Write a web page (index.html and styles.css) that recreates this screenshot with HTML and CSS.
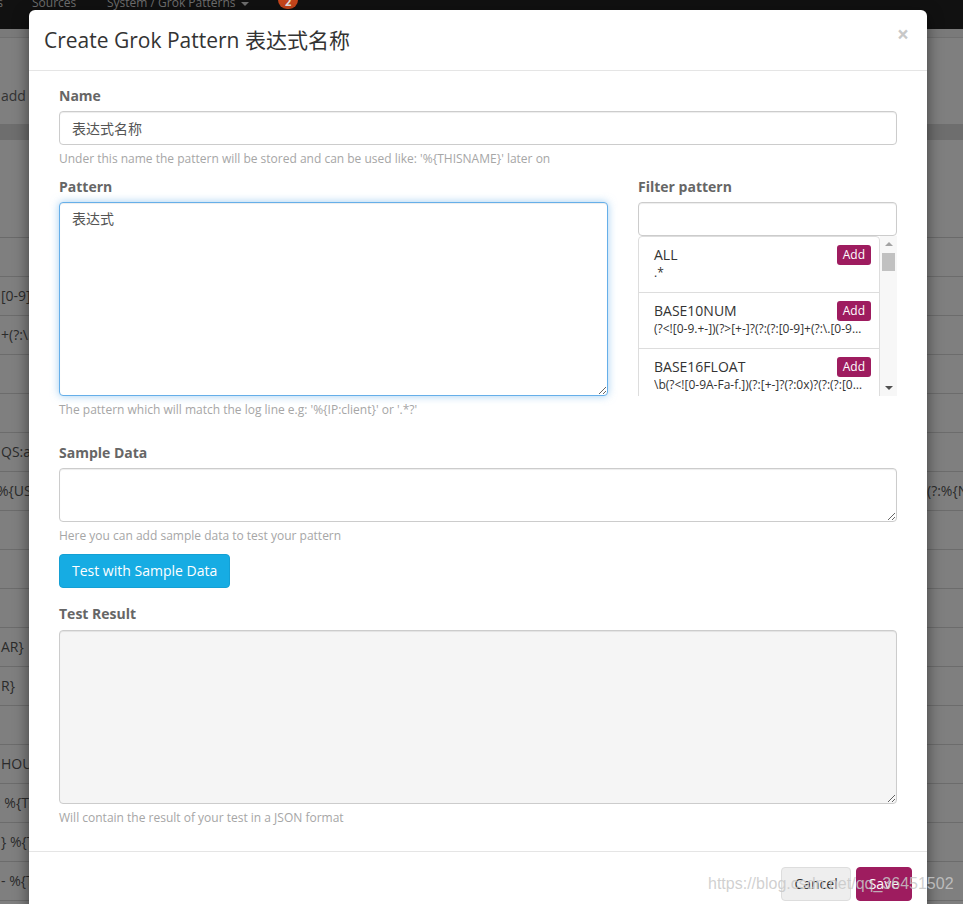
FILE: index.html
```html
<!DOCTYPE html>
<html lang="en">
<head>
<meta charset="utf-8">
<title>Grok Patterns</title>
<link rel="stylesheet" href="styles.css">
</head>
<body>
<div class="page">
  <div class="navbar">
    <span class="nav-item nav-first">Streams</span>
    <span class="nav-item nav-sources">Sources</span>
    <span class="nav-item nav-system">System / Grok Patterns <span class="caret"></span></span>
    <span class="nav-badge">2</span>
  </div>
  <div class="subbar"></div>
  <div class="intro"><span class="intro-text">add your own grok patterns</span></div>
  <div class="thead"></div>
  <div class="table">
    <div class="row row-tall"></div>
    <div class="row"></div>
    <div class="row"><span class="cell">[0-9]+(?:</span></div>
    <div class="row"><span class="cell">+(?:\.[0-9]+)</span></div>
    <div class="row"></div>
    <div class="row"></div>
    <div class="row"><span class="cell">QS:agent}</span></div>
    <div class="row"><span class="cell cell-shift">%{USER}</span><span class="cell-right">(?:%{NUMBER}</span></div>
    <div class="row"></div>
    <div class="row"></div>
    <div class="row"></div>
    <div class="row"><span class="cell">AR}</span></div>
    <div class="row"><span class="cell">R}</span></div>
    <div class="row"></div>
    <div class="row"><span class="cell">HOUR}</span></div>
    <div class="row"><span class="cell cell-shift">: %{TZ}</span></div>
    <div class="row"><span class="cell">} %{TIME}</span></div>
    <div class="row"><span class="cell">- %{TIME}</span></div>
  </div>
</div>

<div class="modal">
  <div class="modal-header">
    <h4 class="modal-title">Create Grok Pattern 表达式名称</h4>
    <span class="close">×</span>
  </div>
  <div class="modal-body">
    <div class="group group-name">
      <label class="label">Name</label>
      <input class="form-control" type="text" value="表达式名称">
      <p class="help">Under this name the pattern will be stored and can be used like: '%{THISNAME}' later on</p>
    </div>
    <div class="pattern-row">
      <div class="col">
        <label class="label">Pattern</label>
        <textarea class="form-control focused ta-pattern">表达式</textarea>
        <p class="help">The pattern which will match the log line e.g: '%{IP:client}' or '.*?'</p>
      </div>
      <div class="col">
        <label class="label">Filter pattern</label>
        <input class="form-control" type="text" value="">
        <div class="list-box">
          <ul class="list">
            <li class="item">
              <div class="item-head"><span class="item-name">ALL</span><span class="btn-add">Add</span></div>
              <div class="item-regex">.*</div>
            </li>
            <li class="item">
              <div class="item-head"><span class="item-name">BASE10NUM</span><span class="btn-add">Add</span></div>
              <div class="item-regex">(?&lt;![0-9.+-])(?&gt;[+-]?(?:(?:[0-9]+(?:\.[0-9]+)?)|(?:\.[0-9]+)))</div>
            </li>
            <li class="item">
              <div class="item-head"><span class="item-name">BASE16FLOAT</span><span class="btn-add">Add</span></div>
              <div class="item-regex">\b(?&lt;![0-9A-Fa-f.])(?:[+-]?(?:0x)?(?:(?:[0-9A-Fa-f]+(?:\.[0-9A-Fa-f]*)?)|(?:\.[0-9A-Fa-f]+)))\b</div>
            </li>
            <li class="item">
              <div class="item-head"><span class="item-name">BASE16NUM</span><span class="btn-add">Add</span></div>
              <div class="item-regex">(?&lt;![0-9A-Fa-f])(?:[+-]?(?:0x)?(?:[0-9A-Fa-f]+))</div>
            </li>
          </ul>
          <div class="scrollbar">
            <div class="sb-btn"><span class="arrow-up"></span></div>
            <div class="sb-track"><div class="sb-thumb"></div></div>
            <div class="sb-btn"><span class="arrow-down"></span></div>
          </div>
        </div>
      </div>
    </div>
    <div class="group group-sample">
      <label class="label">Sample Data</label>
      <textarea class="form-control ta-sample"></textarea>
      <p class="help">Here you can add sample data to test your pattern</p>
      <button class="btn btn-info" type="button">Test with Sample Data</button>
    </div>
    <div class="group group-result">
      <label class="label">Test Result</label>
      <textarea class="form-control ta-result" readonly></textarea>
      <p class="help help-last">Will contain the result of your test in a JSON format</p>
    </div>
  </div>
  <div class="modal-footer">
    <button class="btn btn-default" type="button">Cancel</button>
    <button class="btn btn-primary" type="button">Save</button>
  </div>
</div>

<div class="watermark">https://blog.csdn.net/qq_36451502</div>
</body>
</html>
```

FILE: styles.css
```css
* { box-sizing: border-box; }

html, body {
  margin: 0;
  height: 904px;
  overflow: hidden;
}

body {
  position: relative;
  font-family: "Open Sans", "Noto Sans CJK SC", sans-serif;
  font-size: 14px;
  line-height: 20px;
  color: #333;
  background: #7f7f7f;
}

/* ---------- background page (dimmed by backdrop) ---------- */
.navbar {
  height: 29px;
  background: #111;
  display: flex;
  align-items: flex-start;
  color: #6e6e6e;
  font-size: 12px;
  white-space: nowrap;
  overflow: hidden;
}
.nav-item { margin-top: -7px; }
.nav-first { width: 60px; margin-left: -57px; text-align: right; }
.nav-sources { margin-left: 29px; width: 75px; }
.nav-system { width: 171px; }
.caret {
  display: inline-block;
  width: 0; height: 0;
  margin-left: 2px;
  vertical-align: middle;
  border-top: 4px solid #6e6e6e;
  border-left: 4px solid transparent;
  border-right: 4px solid transparent;
}
.nav-badge {
  margin-top: -9px;
  height: 18px;
  padding: 4px 7px 0;
  border-radius: 9px;
  background: #c6451b;
  color: #e6e6e6;
  font-size: 11px;
  font-weight: bold;
  line-height: 14px;
}

.subbar {
  height: 9px;
  background: #7a7a7a;
  border-bottom: 1px solid #707070;
}
.intro {
  height: 86px;
  padding-top: 48px;
  color: #333;
  white-space: nowrap;
}
.intro-text { padding-left: 1px; }
.thead {
  height: 16px;
  background: #6e6e6e;
}

.table { display: flex; flex-direction: column; }
.row {
  height: 39px;
  border-bottom: 1px solid #6c6c6c;
  display: grid;
  grid-template-columns: 927px max-content;
  align-items: center;
  white-space: nowrap;
  color: #2b2b2b;
}
.row-tall { height: 98px; border-bottom-color: #6a6a6a; }
.cell { grid-column: 1; padding-left: 1px; }
.cell-shift { margin-left: -4px; }
.cell-right { grid-column: 2; }

/* ---------- modal ---------- */
.modal {
  position: absolute;
  top: 10px;
  left: 29px;
  width: 898px;
  background: #fff;
  border-radius: 6px;
  box-shadow: 0 5px 15px rgba(0, 0, 0, 0.5);
}

.modal-header {
  height: 61px;
  padding: 0 18px 0 15px;
  border-bottom: 1px solid #e5e5e5;
  display: flex;
  align-items: center;
  justify-content: space-between;
}
.modal-title {
  margin: 0;
  font-size: 21px;
  font-weight: normal;
  line-height: 26px;
  color: #333;
}
.close {
  margin-top: -13px;
  font-size: 21px;
  font-weight: bold;
  line-height: 20px;
  color: #c8c8c8;
}

.modal-body { padding: 15px 30px 15px; }

.label {
  display: block;
  margin-bottom: 5px;
  font-weight: bold;
  color: #666;
  line-height: 20px;
}

.form-control {
  display: block;
  width: 100%;
  height: 34px;
  padding: 6px 12px;
  font-family: "Open Sans", "Noto Sans CJK SC", sans-serif;
  font-size: 14px;
  line-height: 20px;
  color: #555;
  background: #fff;
  border: 1px solid #ccc;
  border-radius: 4px;
  box-shadow: inset 0 1px 1px rgba(0, 0, 0, 0.075);
  margin: 0;
}
textarea.form-control { resize: vertical; }
.focused {
  border-color: #66afe9;
  box-shadow: inset 0 1px 1px rgba(0, 0, 0, 0.075), 0 0 8px rgba(102, 175, 233, 0.6);
}
.ta-pattern { height: 194px; }
.ta-sample { height: 54px; }
.ta-result { height: 174px; background: #f5f5f5; }

.help {
  margin: 5px 0 10px;
  font-size: 12px;
  line-height: 17px;
  color: #a6a6a6;
}

.pattern-row {
  display: grid;
  grid-template-columns: 1fr 259px;
  column-gap: 30px;
  margin-bottom: 15px;
}

/* filter list with its scrollbar */
.list-box {
  display: flex;
  height: 160px;
  overflow: hidden;
}
.list {
  flex: 1;
  min-width: 0;
  list-style: none;
  margin: 0;
  padding: 0;
  overflow: hidden;
}
.item {
  padding: 9px 15px 11px;
  border: 1px solid #ddd;
  margin-bottom: -1px;
}
.item:first-child { border-top-left-radius: 4px; border-top-right-radius: 4px; }
.item-head {
  height: 18px;
  display: flex;
  align-items: center;
  justify-content: space-between;
}
.item-name { line-height: 18px; color: #333; }
.btn-add {
  height: 20px;
  margin-right: -7px;
  padding: 0 6px;
  border-radius: 3px;
  background: #9e1c5f;
  color: #fff;
  font-size: 12px;
  line-height: 20px;
}
.item-regex {
  font-size: 12px;
  line-height: 17px;
  color: #333;
  white-space: nowrap;
  overflow: hidden;
  text-overflow: ellipsis;
}

.scrollbar {
  width: 17px;
  display: flex;
  flex-direction: column;
  background: #f7f7f7;
}
.sb-btn {
  height: 16px;
  display: flex;
  align-items: center;
  justify-content: center;
}
.arrow-up, .arrow-down {
  width: 0;
  height: 0;
  border-left: 4px solid transparent;
  border-right: 4px solid transparent;
}
.arrow-up { border-bottom: 4px solid #a3a3a3; }
.arrow-down { border-top: 4px solid #505050; }
.sb-track {
  flex: 1;
  padding: 1px 2px 0 2px;
}
.sb-thumb {
  height: 18px;
  background: #c1c1c1;
}

.btn {
  display: inline-block;
  height: 34px;
  margin: 0;
  padding: 6px 12px;
  font-family: "Open Sans", "Noto Sans CJK SC", sans-serif;
  font-size: 14px;
  line-height: 20px;
  border: 1px solid transparent;
  border-radius: 4px;
  cursor: pointer;
}
.btn-info { background: #16ace3; border-color: #14a0d4; color: #fff; }
.btn-default { background: #eee; border-color: #ddd; color: #333; }
.btn-primary { background: #9e1c5f; border-color: #9e1c5f; color: #fff; }

.group-sample .help { margin-bottom: 10px; }
.group-sample .btn { display: block; margin-bottom: 16px; }
.group-result .label { margin-bottom: 6px; }
.help-last { margin-bottom: 10px; }

.modal-footer {
  padding: 15px;
  border-top: 1px solid #e5e5e5;
  display: flex;
  justify-content: flex-end;
  gap: 5px;
}

.watermark {
  position: absolute;
  left: 708px;
  top: 874px;
  font-family: "Liberation Sans", Arial, sans-serif;
  font-size: 16px;
  line-height: 20px;
  color: rgba(200, 200, 200, 0.85);
  white-space: nowrap;
}
```
